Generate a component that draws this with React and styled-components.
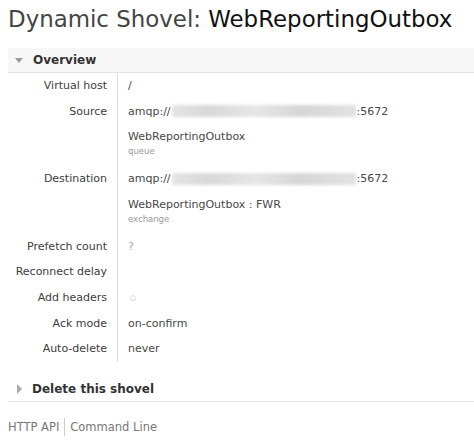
import React from "react";
import styled, { createGlobalStyle } from "styled-components";

const GlobalStyle = createGlobalStyle`
  html, body {
    margin: 0;
    padding: 0;
    background: #fff;
  }
  body {
    font-family: "DejaVu Sans", Verdana, sans-serif;
    font-size: 11px;
    color: #484848;
  }
`;

const Page = styled.div`
  width: 474px;
  height: 443px;
  overflow: hidden;
  padding-left: 8px;
  box-sizing: border-box;
`;

const Title = styled.h1`
  margin: 0;
  padding-top: 6px;
  height: 48px;
  box-sizing: border-box;
  font-size: 22.9px;
  font-weight: normal;
  color: #444;
  white-space: nowrap;

  b {
    font-weight: normal;
    color: #111;
  }
`;

const SectionHead = styled.div`
  display: flex;
  align-items: center;
  gap: 10px;
  height: 24px;
  padding-left: 7px;
  background: ${(p) => (p.$open ? "#f7f7f7" : "transparent")};
  border-bottom: 1px solid #e2e2e2;
  font-weight: bold;
  font-size: 12px;
  color: #333;
`;

const Arrow = styled.span`
  width: 0;
  height: 0;
  ${(p) =>
    p.$open
      ? `
    border-left: 4px solid transparent;
    border-right: 4px solid transparent;
    border-top: 5px solid #999;
    margin-top: 1px;
  `
      : `
    border-top: 5px solid transparent;
    border-bottom: 5px solid transparent;
    border-left: 5px solid #aaa;
    margin-left: 2px;
  `}
`;

const Table = styled.div`
  display: grid;
  grid-template-columns: 110px 1fr;
  padding-bottom: 4px;
`;

const Label = styled.div`
  text-align: right;
  padding-right: 10px;
  border-right: 1px solid #ddd;
  line-height: 25.6px;
  color: #3c3c3c;
  white-space: nowrap;
`;

const Value = styled.div`
  padding-left: 10px;
  line-height: 25.6px;
  height: ${(p) => (p.$block ? "auto" : "25.6px")};
  white-space: nowrap;
  color: ${(p) => (p.$muted ? "#aaa" : "#484848")};
`;

const Dot = styled.span`
  display: inline-block;
  font-size: 7px;
  line-height: 7px;
  vertical-align: 1px;
  padding-left: 2px;
  color: #aaa;
`;

const Block = styled.div`
  display: flex;
  flex-direction: column;
  padding-bottom: 9px;
`;

const Line = styled.div`
  height: 25.6px;
  display: flex;
  align-items: center;
`;

const SubLine = styled.div`
  line-height: 14px;
  margin-top: 6px;
`;

const Small = styled.div`
  font-size: 8.5px;
  color: #999;
  line-height: 12px;
  margin-top: 1px;
`;

const Blur = styled.span`
  display: inline-block;
  width: 184px;
  height: 12px;
  margin: 0 1px;
  background: linear-gradient(90deg, #e4e4e4, #d8d8d8 20%, #e6e6e6 45%, #d6d6d6 70%, #e2e2e2);
  filter: blur(1.5px);
`;

const DeleteHead = styled(SectionHead)`
  margin-top: 11px;
  height: 24px;
`;

const Footer = styled.div`
  display: flex;
  align-items: center;
  margin-top: 16px;
  font-size: 11.5px;
  color: #777;
`;

const FooterLink = styled.span`
  padding: 0 5px;
  line-height: 18px;
  &:first-child {
    padding-left: 0;
    border-right: 1px solid #ccc;
  }
`;

const Endpoint = ({ name, kind }) => (
  <Block>
    <Line>
      amqp://<Blur />:5672
    </Line>
    <SubLine>{name}</SubLine>
    <Small>{kind}</Small>
  </Block>
);

export default function App() {
  return (
    <Page>
      <GlobalStyle />
      <Title>
        Dynamic Shovel: <b>WebReportingOutbox</b>
      </Title>
      <SectionHead $open>
        <Arrow $open />
        Overview
      </SectionHead>
      <Table>
        <Label>Virtual host</Label>
        <Value>/</Value>

        <Label>Source</Label>
        <Value $block>
          <Endpoint name="WebReportingOutbox" kind="queue" />
        </Value>

        <Label>Destination</Label>
        <Value $block>
          <Endpoint name="WebReportingOutbox : FWR" kind="exchange" />
        </Value>

        <Label>Prefetch count</Label>
        <Value $muted>?</Value>

        <Label>Reconnect delay</Label>
        <Value />

        <Label>Add headers</Label>
        <Value>
          <Dot>○</Dot>
        </Value>

        <Label>Ack mode</Label>
        <Value>on-confirm</Value>

        <Label>Auto-delete</Label>
        <Value>never</Value>
      </Table>
      <DeleteHead>
        <Arrow />
        Delete this shovel
      </DeleteHead>
      <Footer>
        <FooterLink>HTTP API</FooterLink>
        <FooterLink>Command Line</FooterLink>
      </Footer>
    </Page>
  );
}
